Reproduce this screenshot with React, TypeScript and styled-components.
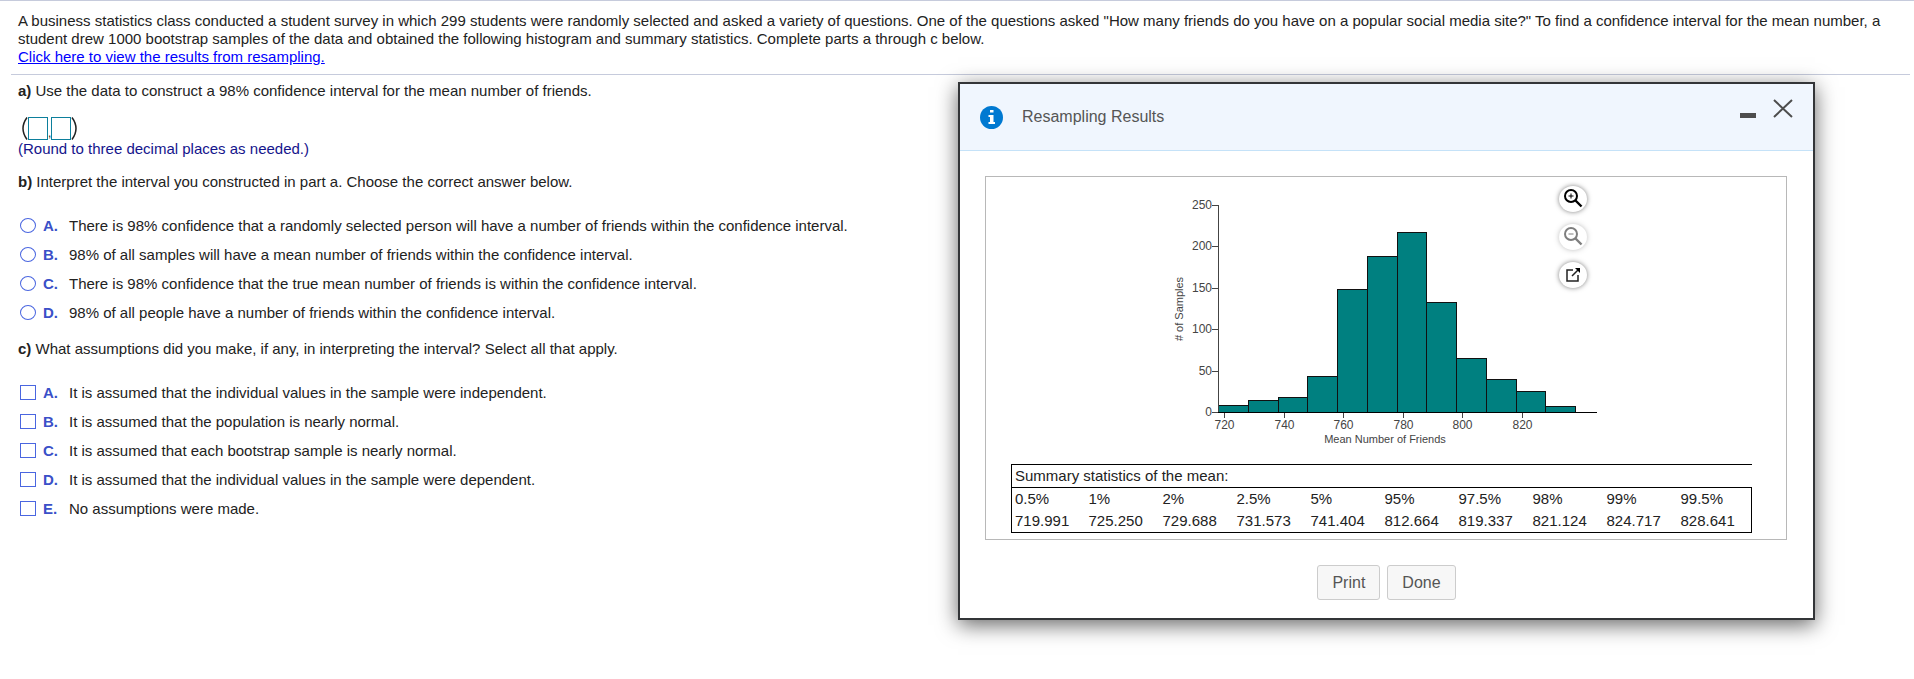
import React from 'react';
import styled, { createGlobalStyle } from 'styled-components';

const GlobalStyle = createGlobalStyle`
  * { box-sizing: border-box; }
  body {
    margin: 0;
    background: #fff;
    color: #222;
    font: 15px/18px "Liberation Sans", Arial, sans-serif;
  }
`;

const Page = styled.main`
  border-top: 1px solid #c6cbdc;
  min-height: 100vh;
`;

const Intro = styled.header`
  margin: 0 4px 0 11px;
  padding: 11px 0 8px 7px;
  border-bottom: 1px solid #c6cbdc;
`;

const IntroText = styled.p`
  margin: 0;
  padding-right: 28px;
`;

const ResultsLink = styled.a`
  color: #00f;
`;

const Question = styled.div`
  padding: 7px 18px;
`;

const Part = styled.section``;

const Prompt = styled.p`
  margin: 0;
`;

const Interval = styled.div`
  display: flex;
  align-items: center;
  height: 23px;
  margin: 17px 0 0 4px;
`;

const Paren = styled.svg`
  width: 6px;
  height: 23px;
  fill: none;
  stroke: #222;
  stroke-width: 1.5;
`;

const Bound = styled.input`
  width: 20px;
  height: 23px;
  padding: 0;
  border: 1px solid #0c7f9c;
  background: #fff;
  font: inherit;
`;

const Comma = styled.span`
  width: 3px;
  font-size: 12px;
  line-height: 14px;
  align-self: flex-end;
`;

const Hint = styled.p`
  margin: 0 0 15px;
  color: #14148c;
`;

const Choices = styled.fieldset`
  margin: 20px 0 13px;
  padding: 0;
  border: 0;
`;

const Choice = styled.label`
  display: flex;
  align-items: center;
  height: 29px;
  padding-left: 2px;
`;

const Tick = styled.input<{ $round?: boolean }>`
  appearance: none;
  width: 16px;
  height: 15px;
  margin: 0 7px 0 0;
  border: 1px solid #4a66e0;
  border-radius: ${(p) => (p.$round ? '50%' : '0')};
  background: #fff;
`;

const Letter = styled.b`
  width: 26px;
  color: #3a50c8;
`;

const Dialog = styled.div`
  position: absolute;
  top: 82px;
  right: 99px;
  width: 857px;
  border: 2px solid #333538;
  background: #fff;
  box-shadow: 0 5px 20px rgba(0, 0, 0, 0.6);
`;

const DialogHeader = styled.div`
  display: flex;
  align-items: center;
  height: 67px;
  padding: 0 20px;
  border-bottom: 1px solid #c5e2f8;
  background: #f0f6fe;
`;

const DialogTitle = styled.h2`
  flex: 1;
  margin: 0 0 0 19px;
  color: #555;
  font-size: 16px;
  line-height: 20px;
  font-weight: normal;
`;

const WindowButton = styled.button`
  align-self: flex-start;
  display: flex;
  margin: 14px 0 0 16px;
  padding: 0;
  border: 0;
  background: none;
  color: #4d4d4d;
`;

const Results = styled.div`
  margin: 25px 26px 0 25px;
  padding: 9px 34px 6px 25px;
  border: 1px solid #b8b8b8;
`;

const ChartRow = styled.div`
  display: flex;
  justify-content: center;
  align-items: flex-start;
  padding-right: 7px;
`;

const Chart = styled.svg`
  width: 450px;
  height: 278px;
  margin-right: -60px;
  font-family: "Liberation Sans", Arial, sans-serif;
  font-size: 12px;
  fill: #444;
`;

const ChartTools = styled.div`
  display: flex;
  flex-direction: column;
  gap: 12px;
`;

const Tool = styled.button`
  position: relative;
  display: flex;
  align-items: center;
  justify-content: center;
  width: 28px;
  height: 26px;
  padding: 0;
  border: 0;
  border-radius: 50%;
  background: #fff;
  box-shadow: 0 0 5px rgba(0, 0, 0, 0.5);
  &:disabled { opacity: 0.5; }
`;

const Stats = styled.table`
  width: 741px;
  table-layout: fixed;
  border-collapse: collapse;
  border-left: 1px solid #000;
  color: #222;
  text-align: left;
`;

const StatsTitle = styled.th`
  height: 23px;
  padding: 0 3px;
  border-top: 1px solid #000;
  border-bottom: 1px solid #000;
  font-weight: normal;
`;

const StatsBody = styled.tbody`
  border-right: 1px solid #000;
  border-bottom: 1px solid #000;
`;

const StatsHead = styled.th`
  height: 23px;
  padding: 0 3px;
  font-weight: normal;
`;

const StatsCell = styled.td`
  height: 22px;
  padding: 0 3px;
`;

const Actions = styled.div`
  display: flex;
  justify-content: center;
  gap: 7px;
  padding: 25px 0 18px;
`;

const ActionButton = styled.button`
  height: 35px;
  padding: 0 14px;
  border: 1px solid #ccc;
  border-radius: 3px;
  background: #f7f7f7;
  color: #555;
  font: 16px/20px "Liberation Sans", Arial, sans-serif;
`;

const interpretations = [
  'There is 98% confidence that a randomly selected person will have a number of friends within the confidence interval.',
  '98% of all samples will have a mean number of friends within the confidence interval.',
  'There is 98% confidence that the true mean number of friends is within the confidence interval.',
  '98% of all people have a number of friends within the confidence interval.',
];

const assumptions = [
  'It is assumed that the individual values in the sample were independent.',
  'It is assumed that the population is nearly normal.',
  'It is assumed that each bootstrap sample is nearly normal.',
  'It is assumed that the individual values in the sample were dependent.',
  'No assumptions were made.',
];

const counts = [8, 15, 18, 43, 149, 189, 217, 133, 65, 40, 25, 7];

const percentiles = [
  ['0.5%', '719.991'],
  ['1%', '725.250'],
  ['2%', '729.688'],
  ['2.5%', '731.573'],
  ['5%', '741.404'],
  ['95%', '812.664'],
  ['97.5%', '819.337'],
  ['98%', '821.124'],
  ['99%', '824.717'],
  ['99.5%', '828.641'],
];

const AXIS_X = 49;
const BASE_Y = 226;
const yAt = (n: number) => Math.round(BASE_Y - n * 0.828) + 0.5;
const xAt = (n: number) => Math.round(AXIS_X + 6 + (n - 720) * 2.975) + 0.5;

function Histogram() {
  return (
    <Chart viewBox="0 0 450 278" role="img" aria-label="Histogram of bootstrap sample means">
      {counts.map((n, i) => {
        const x = i === 0 ? AXIS_X + 0.5 : xAt(718 + i * 10);
        return (
          <rect key={i} x={x} y={yAt(n)} width={xAt(728 + i * 10) - x} height={BASE_Y + 0.5 - yAt(n)} fill="#008080" stroke="#111" />
        );
      })}
      <path d={`M${AXIS_X + 0.5} 19V${BASE_Y + 0.5}`} stroke="#444" />
      <path d={`M${AXIS_X} ${BASE_Y + 0.5}H428`} stroke="#000" />
      {[0, 50, 100, 150, 200, 250].map((n) => (
        <g key={n}>
          <path d={`M43 ${yAt(n)}h6`} stroke="#444" />
          <text x="43" y={yAt(n) + 3.5} textAnchor="end">{n}</text>
        </g>
      ))}
      {[720, 740, 760, 780, 800, 820].map((n) => (
        <g key={n}>
          <path d={`M${xAt(n)} 227v5`} stroke="#444" />
          <text x={xAt(n)} y="243" textAnchor="middle">{n}</text>
        </g>
      ))}
      <text x="216" y="257" textAnchor="middle" fontSize="11">Mean Number of Friends</text>
      <text transform="translate(14 123) rotate(-90)" textAnchor="middle" fontSize="11"># of Samples</text>
    </Chart>
  );
}

function Magnifier({ plus }: { plus?: boolean }) {
  return (
    <svg width="20" height="20" viewBox="0 1 20 20" fill="none" stroke="#000" aria-hidden="true">
      <circle cx="8" cy="8" r="6" strokeWidth="2" />
      <path d="M12 12l6.500 6.500" strokeWidth="2.400" />
      <path d={plus ? 'M5.500 8h5M8 5.500v5' : 'M5.500 8h5'} />
    </svg>
  );
}

function ResultsDialog() {
  return (
    <Dialog role="dialog" aria-labelledby="results-title">
      <DialogHeader>
        <svg width="23" height="23" viewBox="0 0 23 23" aria-hidden="true">
          <circle cx="11.500" cy="11.500" r="11.500" fill="#0079d1" />
          <path d="M10 4h3.500v2.500H10zM8.500 9h5v7h1.500v2H8.500v-2H10v-5H8.500z" fill="#fff" />
        </svg>
        <DialogTitle id="results-title">Resampling Results</DialogTitle>
        <WindowButton aria-label="Minimize">
          <svg width="18" height="22" viewBox="0 0 18 22"><path d="M1 15h16v5H1z" fill="currentColor" /></svg>
        </WindowButton>
        <WindowButton aria-label="Close">
          <svg width="20" height="22" viewBox="0 0 20 22"><path d="M1 2l18 17M19 2L1 19" stroke="currentColor" strokeWidth="2" /></svg>
        </WindowButton>
      </DialogHeader>
      <Results>
        <ChartRow>
          <Histogram />
          <ChartTools>
            <Tool aria-label="Zoom in"><Magnifier plus /></Tool>
            <Tool aria-label="Zoom out" disabled><Magnifier /></Tool>
            <Tool aria-label="Open in new window">
              <svg width="16" height="16" viewBox="0 0 16 16" fill="none" stroke="#222" strokeWidth="1.500" aria-hidden="true">
                <path d="M8 3H2v11h11V8M7 9l6-6" />
                <path d="M10 1h5v5z" fill="#000" stroke="none" />
              </svg>
            </Tool>
          </ChartTools>
        </ChartRow>
        <Stats>
          <thead>
            <tr><StatsTitle colSpan={10}>Summary statistics of the mean:</StatsTitle></tr>
          </thead>
          <StatsBody>
            <tr>{percentiles.map(([p]) => <StatsHead key={p} scope="col">{p}</StatsHead>)}</tr>
            <tr>{percentiles.map(([p, v]) => <StatsCell key={p}>{v}</StatsCell>)}</tr>
          </StatsBody>
        </Stats>
      </Results>
      <Actions>
        <ActionButton>Print</ActionButton>
        <ActionButton>Done</ActionButton>
      </Actions>
    </Dialog>
  );
}

export default function App() {
  return (
    <Page>
      <GlobalStyle />
      <Intro>
        <IntroText>
          A business statistics class conducted a student survey in which 299 students were randomly selected and asked a variety of questions. One of the questions asked "How many friends do you have on a popular social media site?" To find a confidence interval for the mean number, a student drew 1000 bootstrap samples of the data and obtained the following histogram and summary statistics. Complete parts a through c below.
        </IntroText>
        <ResultsLink href="#results">Click here to view the results from resampling.</ResultsLink>
      </Intro>
      <Question>
        <Part>
          <Prompt><b>a)</b> Use the data to construct a 98% confidence interval for the mean number of friends.</Prompt>
          <Interval>
            <Paren viewBox="0 0 6 23"><path d="M5 0.500Q-3 11.500 5 22.500" /></Paren>
            <Bound aria-label="Lower bound" />
            <Comma>,</Comma>
            <Bound aria-label="Upper bound" />
            <Paren viewBox="0 0 6 23"><path d="M1 0.500Q9 11.500 1 22.500" /></Paren>
          </Interval>
          <Hint>(Round to three decimal places as needed.)</Hint>
        </Part>
        <Part>
          <Prompt><b>b)</b> Interpret the interval you constructed in part a. Choose the correct answer below.</Prompt>
          <Choices aria-label="Interpretation">
            {interpretations.map((text, i) => (
              <Choice key={text}>
                <Tick type="radio" name="interpretation" $round />
                <Letter>{'ABCD'[i]}.</Letter>
                {text}
              </Choice>
            ))}
          </Choices>
        </Part>
        <Part>
          <Prompt><b>c)</b> What assumptions did you make, if any, in interpreting the interval? Select all that apply.</Prompt>
          <Choices aria-label="Assumptions">
            {assumptions.map((text, i) => (
              <Choice key={text}>
                <Tick type="checkbox" />
                <Letter>{'ABCDE'[i]}.</Letter>
                {text}
              </Choice>
            ))}
          </Choices>
        </Part>
      </Question>
      <ResultsDialog />
    </Page>
  );
}
